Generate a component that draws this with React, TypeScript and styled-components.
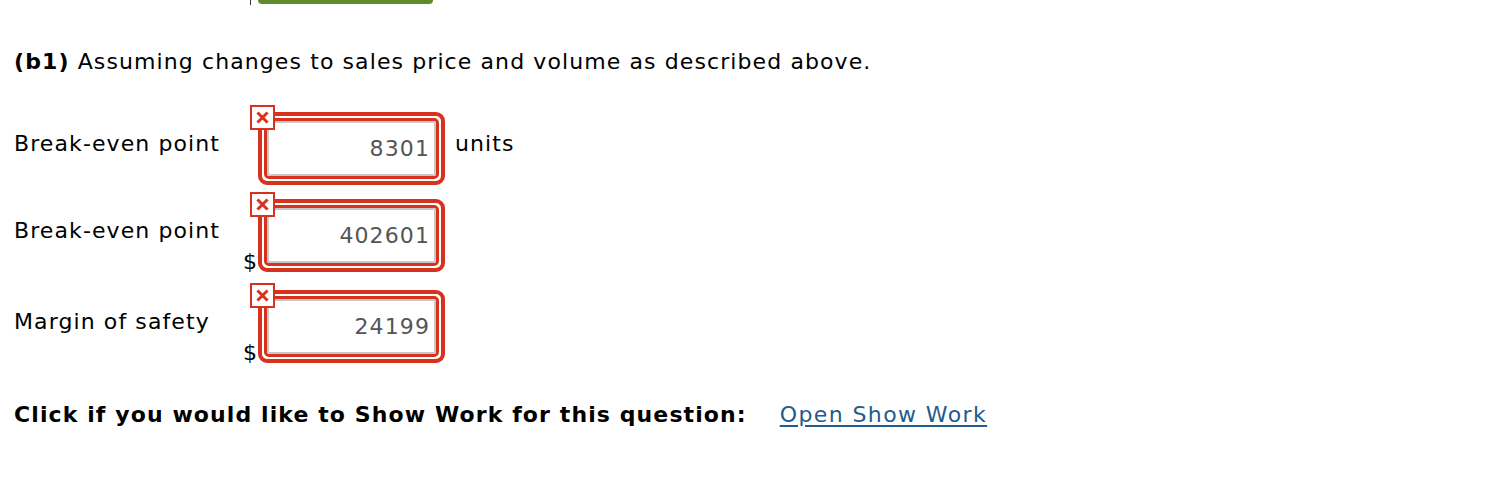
import styled, { createGlobalStyle } from 'styled-components';

const RED = '#d8321f';

const GlobalStyle = createGlobalStyle`
  body {
    margin: 0;
    background: #fff;
    font-family: "DejaVu Sans", Verdana, sans-serif;
    color: #000;
  }
`;

const Page = styled.div`
  padding: 0 14px;
  font-size: 22px;
  line-height: 26px;
  letter-spacing: 1.1px;
`;

const TopStrip = styled.div`
  display: flex;
  align-items: flex-start;
  gap: 7px;
  margin-left: 236px;
  height: 5px;
`;

const Caret = styled.div`
  width: 1px;
  height: 5px;
  background: #333;
`;

const GreenButton = styled.div`
  width: 175px;
  height: 4px;
  background: #608b2a;
  border-radius: 0 0 8px 8px;
`;

const Heading = styled.p`
  margin: 44px 0 0;
`;

const Rows = styled.div`
  display: flex;
  flex-direction: column;
  margin-top: 37px;
`;

const Row = styled.div<{ $gap: number }>`
  display: flex;
  align-items: stretch;
  margin-bottom: ${(p) => p.$gap}px;
`;

const Label = styled.div`
  width: 229px;
  padding-top: 19px;
`;

const Currency = styled.div`
  width: 15px;
  align-self: flex-end;
  line-height: 24px;
  margin-bottom: -2px;
`;

const FieldWrap = styled.div`
  position: relative;
`;

const OuterRing = styled.div`
  width: 187px;
  height: 73px;
  box-sizing: border-box;
  border: 4px solid ${RED};
  border-radius: 9px;
  padding: 2px;
  background: #fff;
`;

const InnerRing = styled.div`
  height: 100%;
  box-sizing: border-box;
  border: 3px solid ${RED};
  border-radius: 5px;
`;

const Input = styled.input`
  display: block;
  width: 100%;
  height: 100%;
  box-sizing: border-box;
  margin: 0;
  border: 2px solid #c8c8c8;
  border-radius: 3px;
  padding: 0 4px 0 0;
  font: inherit;
  font-size: 22px;
  letter-spacing: 1.1px;
  color: #555;
  text-align: right;
  background: #fff;
  outline: none;
`;

const ErrorBadge = styled.div`
  position: absolute;
  top: -7px;
  left: -8px;
  width: 25px;
  height: 25px;
  box-sizing: border-box;
  border: 2px solid ${RED};
  background: #fff;
  display: flex;
  align-items: center;
  justify-content: center;
`;

const Unit = styled.div`
  padding: 19px 0 0 10px;
`;

const Footer = styled.div`
  display: flex;
  align-items: baseline;
  gap: 33px;
  margin-top: 39px;
`;

const Prompt = styled.span`
  font-weight: bold;
  letter-spacing: 1.1px;
`;

const Link = styled.a`
  color: #235b8e;
  letter-spacing: 1.4px;
  text-decoration: underline;
  text-underline-offset: 3px;
  cursor: pointer;
`;

const CrossIcon = () => (
  <svg width="13" height="13" viewBox="0 0 13 13">
    <path d="M2.5 2.5 L10.5 10.5 M10.5 2.5 L2.5 10.5" stroke={RED} strokeWidth="3" strokeLinecap="square" />
  </svg>
);

type Answer = { label: string; value: string; currency?: boolean; unit?: string; gap: number };

const answers: Answer[] = [
  { label: 'Break-even point', value: '8301', unit: 'units', gap: 14 },
  { label: 'Break-even point', value: '402601', currency: true, gap: 18 },
  { label: 'Margin of safety', value: '24199', currency: true, gap: 0 },
];

export default function App() {
  return (
    <>
      <GlobalStyle />
      <Page>
        <TopStrip>
          <Caret />
          <GreenButton />
        </TopStrip>
        <Heading>
          <b>(b1)</b> Assuming changes to sales price and volume as described above.
        </Heading>
        <Rows>
          {answers.map((a, i) => (
            <Row key={i} $gap={a.gap}>
              <Label>{a.label}</Label>
              <Currency>{a.currency ? '$' : ''}</Currency>
              <FieldWrap>
                <OuterRing>
                  <InnerRing>
                    <Input readOnly value={a.value} />
                  </InnerRing>
                </OuterRing>
                <ErrorBadge>
                  <CrossIcon />
                </ErrorBadge>
              </FieldWrap>
              {a.unit && <Unit>{a.unit}</Unit>}
            </Row>
          ))}
        </Rows>
        <Footer>
          <Prompt>Click if you would like to Show Work for this question:</Prompt>
          <Link>Open Show Work</Link>
        </Footer>
      </Page>
    </>
  );
}
